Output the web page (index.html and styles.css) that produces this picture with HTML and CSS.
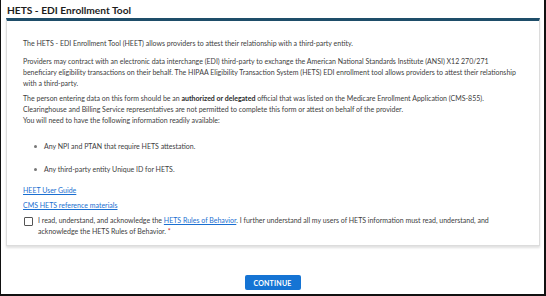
FILE: index.html
```html
<!DOCTYPE html>
<html lang="en">
<head>
<meta charset="utf-8">
<title>HETS - EDI Enrollment Tool</title>
<link rel="stylesheet" href="styles.css">
</head>
<body>
<div class="frame">
  <h1 class="title">HETS - EDI Enrollment Tool</h1>
  <div class="card">
    <p class="p1">The HETS - EDI Enrollment Tool (HEET) allows providers to attest their relationship with a third-party entity.</p>
    <p class="p2">Providers may contract with an electronic data interchange (EDI) third-party to exchange the American National Standards Institute (ANSI) X12 270/271 beneficiary eligibility transactions on their behalf. The HIPAA Eligibility Transaction System (HETS) EDI enrollment tool allows providers to attest their relationship with a third-party.</p>
    <p class="p3">The person entering data on this form should be an <b>authorized or delegated</b> official that was listed on the Medicare Enrollment Application (CMS-855).<br>Clearinghouse and Billing Service representatives are not permitted to complete this form or attest on behalf of the provider.<br>You will need to have the following information readily available:</p>
    <ul class="list">
      <li>Any NPI and PTAN that require HETS attestation.</li>
      <li>Any third-party entity Unique ID for HETS.</li>
    </ul>
    <p class="link-row"><a href="#">HEET User Guide</a></p>
    <p class="link-row"><a href="#">CMS HETS reference materials</a></p>
    <div class="ack">
      <span class="box"></span>
      <p class="ack-text">I read, understand, and acknowledge the <a href="#">HETS Rules of Behavior</a>. I further understand all my users of HETS information must read, understand, and acknowledge the HETS Rules of Behavior. <span class="req">*</span></p>
    </div>
  </div>
  <div class="actions"><button class="btn">CONTINUE</button></div>
</div>
</body>
</html>
```
FILE: styles.css
```css
html, body { margin: 0; padding: 0; background: #fff; }
body { font-family: Lato, "Open Sans", sans-serif; color: #404040; }
.frame {
  width: 546px; height: 296px; box-sizing: border-box;
  border-left: 1px solid #111; border-right: 2px solid #111; border-bottom: 2px solid #111;
  display: flex; flex-direction: column;
}
.title {
  margin: 0; padding: 4px 0 0 6px; height: 14px; flex: none;
  font-size: 10.2px; font-weight: 700; color: #1d1d1d; line-height: 12px;
}
.card {
  flex: none;
  margin: 0 4px 0 5px;
  border: 1px solid #dcdcdc; border-top: 3px solid #1e4d69;
  box-shadow: 0 2px 2px rgba(0,0,0,0.12);
  padding: 17px 16px 8px 16px;
  font-size: 7px; line-height: 11px;
}
.card p { margin: 0; }
.p1 { margin-bottom: 7px !important; }
.p2 { margin-bottom: 4px !important; }
.p3 b { font-weight: 700; color: #2a2a2a; }
.list { margin: 15px 0 0 0; padding: 0 0 0 21px; list-style: none; }
.list li { position: relative; margin-bottom: 12px; }
.list li:last-child { margin-bottom: 10px; }
.list li::before {
  content: ""; position: absolute; left: -10px; top: 4px;
  width: 3px; height: 3px; border-radius: 50%; background: #777;
}
.link-row { margin-bottom: 4px !important; }
a { color: #1a6fd1; text-decoration: underline; }
.ack { display: flex; align-items: flex-start; gap: 5px; margin-top: 4px; }
.box {
  flex: none; width: 7px; height: 7px; border: 1px solid #555; border-radius: 1px;
  margin: 2px 0 0 1px;
}
.req { color: #d0262b; }
.actions { flex: 1; display: flex; justify-content: center; align-items: flex-start; padding-top: 29px; }
.btn {
  font-family: Lato, sans-serif; font-weight: 700; font-size: 7px; letter-spacing: 0.2px;
  color: #fff; background: #1574d4; border: none; border-radius: 2px;
  width: 56px; height: 15px; padding: 0; cursor: pointer;
}
```
